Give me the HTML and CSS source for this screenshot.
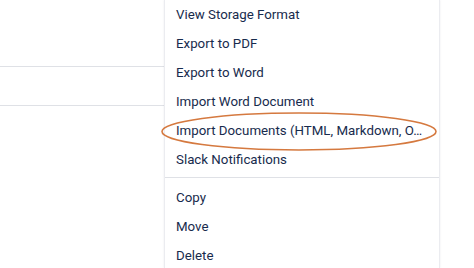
FILE: index.html
```html
<!DOCTYPE html>
<html>
<head>
<meta charset="utf-8">
<link rel="stylesheet" href="styles.css">
</head>
<body>
<div class="page">
  <div class="side">
    <div class="side-band"></div>
  </div>
  <div class="menu">
    <div class="section">
      <div class="item">View Storage Format</div>
      <div class="item">Export to PDF</div>
      <div class="item">Export to Word</div>
      <div class="item">Import Word Document</div>
      <div class="item">Import Documents (HTML, Markdown, O…</div>
      <div class="item">Slack Notifications</div>
    </div>
    <div class="section second">
      <div class="item">Copy</div>
      <div class="item">Move</div>
      <div class="item">Delete</div>
    </div>
    <svg class="oval" width="280" height="42" viewBox="0 0 280 42">
      <ellipse cx="139" cy="20.5" rx="137" ry="18.5" fill="none" stroke="#d5793f" stroke-width="1.6"/>
    </svg>
  </div>
</div>
</body>
</html>
```
FILE: styles.css
```css
html, body {
  margin: 0;
  padding: 0;
  background: #ffffff;
}
.page {
  display: flex;
  width: 474px;
  height: 268px;
  overflow: hidden;
}
.side {
  width: 164px;
  padding-top: 66px;
  box-sizing: border-box;
}
.side-band {
  height: 38px;
  border-top: 1px solid #dfe1e6;
  border-bottom: 1px solid #dfe1e6;
}
.menu {
  position: relative;
  width: 274px;
  border-left: 1px solid #ebecf0;
  border-right: 1px solid #ebecf0;
  box-shadow: 0 0 2px rgba(9, 30, 66, 0.08);
}
.section {
  padding-bottom: 3px;
}
.section.second {
  border-top: 1px solid #dfe1e6;
  padding-top: 5px;
}
.item {
  height: 29px;
  line-height: 30px;
  padding-left: 11px;
  font-family: Roboto, "Liberation Sans", Arial, sans-serif;
  font-size: 13.3px;
  color: #172b4d;
  white-space: nowrap;
}
.oval {
  position: absolute;
  left: -5px;
  top: 111px;
}
```
